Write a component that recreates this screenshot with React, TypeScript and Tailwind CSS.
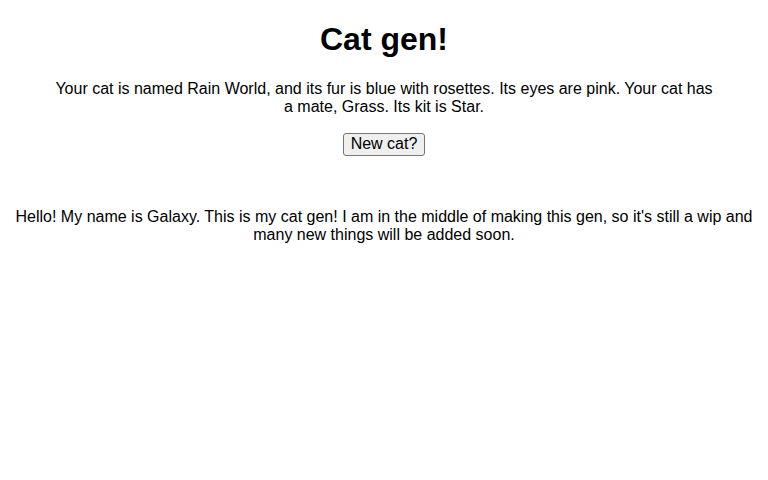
export default function App() {
  return (
    <div className="px-2 pt-[21px] text-center text-black font-['Liberation_Sans',Arial,sans-serif]">
      <h1 className="text-[32px] font-bold leading-[37px]">Cat gen!</h1>
      <p className="mx-auto mt-[22px] w-[662px] text-base leading-[18.4px]">
        Your cat is named Rain World, and its fur is blue with rosettes. Its eyes are pink. Your cat has a mate, Grass. Its kit is Star.
      </p>
      <div className="mt-4 flex justify-center">
        <button className="h-[23px] rounded-[3px] border border-[#767676] bg-[#efefef] px-[7px] text-base leading-[18px] text-black">
          New cat?
        </button>
      </div>
      <p className="mt-[52px] text-base leading-[18.4px]">
        Hello! My name is Galaxy. This is my cat gen! I am in the middle of making this gen, so it's still a wip and many new things will be added soon.
      </p>
    </div>
  );
}
